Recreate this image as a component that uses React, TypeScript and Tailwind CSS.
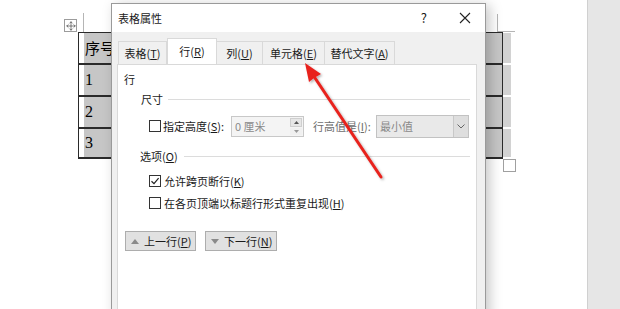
import { Move } from 'lucide-react';

const ui = "font-['Noto_Sans_CJK_SC',sans-serif]";

function Box({ checked = false }: { checked?: boolean }) {
  return (
    <span className="w-[12px] h-[12px] border border-[#333] bg-white flex items-center justify-center shrink-0">
      {checked && (
        <svg width="10" height="10" viewBox="0 0 10 10">
          <path d="M1.5 5.2 L4 7.6 L8.6 2.2" fill="none" stroke="#222" strokeWidth="1.2" />
        </svg>
      )}
    </span>
  );
}

function Tab({ label, k, active = false, w }: { label: string; k: string; active?: boolean; w: string }) {
  if (active) {
    return (
      <div className={`${w} h-[26px] -mt-[3px] -mb-px bg-white border border-b-0 border-[#d9d9d9] z-10 flex items-center justify-center whitespace-nowrap`}>
        {label}(<u>{k}</u>)
      </div>
    );
  }
  return (
    <div className={`${w} h-[23px] border border-b-0 border-[#d9d9d9] bg-[#f0f0f0] flex items-center justify-center -ml-px first:ml-0 whitespace-nowrap`}>
      {label}(<u>{k}</u>)
    </div>
  );
}

function Row({ cls = '', children }: { cls?: string; children?: React.ReactNode }) {
  return (
    <div className={`flex ${cls}`}>
      <div className="w-[425px] h-full border-l border-r border-[#2a2a2a] pl-[5px]">
        <div className="h-full bg-[#c6c6c6] flex items-center pl-[1px] font-['Liberation_Serif','Noto_Sans_CJK_SC',serif] text-[16px] text-black">
          {children}
        </div>
      </div>
      <div className="w-[8px] h-full bg-[#d2d2d2]" />
    </div>
  );
}

function Line() {
  return (
    <div className="flex">
      <div className="w-[425px] h-[2px] bg-[#2a2a2a]" />
    </div>
  );
}

export default function App() {
  return (
    <div className="relative w-[620px] h-[309px] bg-white overflow-hidden flex">
      {/* document page */}
      <div className="relative flex-1">
        <div className="absolute left-[83px] top-[13px] w-px h-[19px] bg-[#b5b5b5]" />
        <div className="absolute left-[497px] top-[14px] w-px h-[17px] bg-[#b5b5b5]" />
        <div className="absolute left-[497px] top-[31px] w-[18px] h-px bg-[#b5b5b5]" />
        <div className="absolute left-[64px] top-[19px] w-[13px] h-[13px] border border-[#9c9c9c] bg-white flex items-center justify-center">
          <Move size={10} strokeWidth={1.6} color="#444" />
        </div>

        <div className="ml-[78px] mt-[32px] flex flex-col">
          <div className="w-[425px] h-px bg-[#2a2a2a]" />
          <Row cls="h-[30px]">
            <span className={`${ui} text-[15px] whitespace-nowrap`}>序号</span>
          </Row>
          <Line />
          <Row cls="h-[30px]">1</Row>
          <Line />
          <Row cls="h-[30px]">2</Row>
          <Line />
          <Row cls="h-[28px]">3</Row>
          <div className="w-[425px] h-[2px] bg-[#2a2a2a]" />
          <div className="ml-[425px] w-[13px] h-[13px] border border-[#a0a0a0] bg-white" />
        </div>
      </div>
      <div className="w-[33px] bg-[#e6e6e6] border-l border-[#d0d0d0]" />

      {/* dialog window */}
      <div className={`${ui} absolute left-[111px] top-[3px] w-[375px] h-[330px] border border-[#9a9a9a] bg-[#f0f0f0] flex flex-col text-[11px] text-[#1a1a1a] shadow-[4px_2px_12px_rgba(0,0,0,0.22)]`}>
        <div className="h-[28px] bg-white flex items-center pl-[6px] pr-[14px]">
          <span className="flex-1">表格属性</span>
          <span className="text-[13px] mr-[32px]">?</span>
          <svg width="12" height="12" viewBox="0 0 12 12">
            <path d="M1 1 L11 11 M11 1 L1 11" stroke="#222" strokeWidth="1.1" />
          </svg>
        </div>

        <div className="flex pl-[6px] mt-[9px]">
          <Tab label="表格" k="T" w="w-[49px]" />
          <Tab label="行" k="R" w="w-[50px]" active />
          <Tab label="列" k="U" w="w-[47px]" />
          <Tab label="单元格" k="E" w="w-[63px]" />
          <Tab label="替代文字" k="A" w="w-[71px]" />
        </div>

        <div className="ml-[5px] w-[360px] flex-1 bg-white border border-[#d9d9d9] flex flex-col pl-[6px] pr-[4px] whitespace-nowrap">
          <div className="h-[20px] mt-[4px] flex items-center">行</div>

          <div className="h-[20px] flex items-center pl-[17px]">
            <span>尺寸</span>
            <span className="flex-1 h-px bg-[#dcdcdc] ml-[5px] mr-[2px]" />
          </div>

          <div className="h-[34px] flex items-center pl-[25px]">
            <Box />
            <span className="ml-[2px] w-[68px] shrink-0">指定高度(<u>S</u>):</span>
            <div className="w-[73px] h-[21px] shrink-0 border border-[#c8c8c8] bg-[#f4f4f4] flex">
              <span className="flex-1 flex items-center pl-[3px] text-[#8a8a8a]">0 厘米</span>
              <div className="w-[12px] my-[1px] mr-[1px] flex flex-col gap-px">
                <div className="flex-1 bg-[#e6e6e6] border border-[#cfcfcf] flex items-center justify-center">
                  <svg width="5" height="3" viewBox="0 0 5 3"><path d="M0 3 L2.5 0 L5 3Z" fill="#555" /></svg>
                </div>
                <div className="flex-1 bg-[#f0f0f0] flex items-center justify-center">
                  <svg width="5" height="3" viewBox="0 0 5 3"><path d="M0 0 L2.5 3 L5 0Z" fill="#999" /></svg>
                </div>
              </div>
            </div>
            <span className="ml-[9px] w-[63px] shrink-0 text-[#6d6d6d]">行高值是(<u>I</u>):</span>
            <div className="w-[93px] h-[23px] shrink-0 border border-[#c2c2c2] bg-[#e9e9e9] flex">
              <span className="flex-1 flex items-center pl-[3px] text-[#8a8a8a]">最小值</span>
              <div className="w-[15px] bg-[#dedede] border-l border-[#c8c8c8] flex items-center justify-center">
                <svg width="8" height="5" viewBox="0 0 8 5"><path d="M0.5 0.5 L4 4 L7.5 0.5" fill="none" stroke="#666" strokeWidth="1" /></svg>
              </div>
            </div>
          </div>

          <div className="h-[26px] flex items-center pl-[16px]">
            <span>选项(<u>O</u>)</span>
            <span className="flex-1 h-px bg-[#dcdcdc] ml-[6px] mr-[2px]" />
          </div>

          <div className="h-[24px] flex items-center pl-[25px]">
            <Box checked />
            <span className="ml-[3px]">允许跨页断行(<u>K</u>)</span>
          </div>

          <div className="h-[20px] flex items-center pl-[25px]">
            <Box />
            <span className="ml-[3px]">在各页顶端以标题行形式重复出现(<u>H</u>)</span>
          </div>

          <div className="mt-[18px] flex gap-[9px] pl-[1px]">
            <div className="w-[71px] h-[20px] bg-[#e1e1e1] border border-[#adadad] flex items-center pl-[5px] gap-[5px]">
              <svg width="8" height="5" viewBox="0 0 8 5"><path d="M0 5 L4 0 L8 5Z" fill="#8a8a8a" /></svg>
              <span>上一行(<u>P</u>)</span>
            </div>
            <div className="w-[72px] h-[20px] bg-[#e1e1e1] border border-[#adadad] flex items-center pl-[5px] gap-[5px]">
              <svg width="8" height="5" viewBox="0 0 8 5"><path d="M0 0 L4 5 L8 0Z" fill="#8a8a8a" /></svg>
              <span>下一行(<u>N</u>)</span>
            </div>
          </div>
        </div>
      </div>

      {/* red annotation arrow */}
      <svg className="absolute left-0 top-0 pointer-events-none" width="620" height="309">
        <defs>
          <filter id="sh" x="-20%" y="-20%" width="140%" height="140%">
            <feDropShadow dx="1.5" dy="1.5" stdDeviation="1.2" floodColor="#000" floodOpacity="0.3" />
          </filter>
        </defs>
        <g filter="url(#sh)">
          <path d="M381 177 L313 75" stroke="#e8211e" strokeWidth="3" strokeLinecap="round" />
          <path d="M305 63 L321 74 L314 78 L309 82 Z" fill="#e8211e" />
        </g>
      </svg>
    </div>
  );
}
